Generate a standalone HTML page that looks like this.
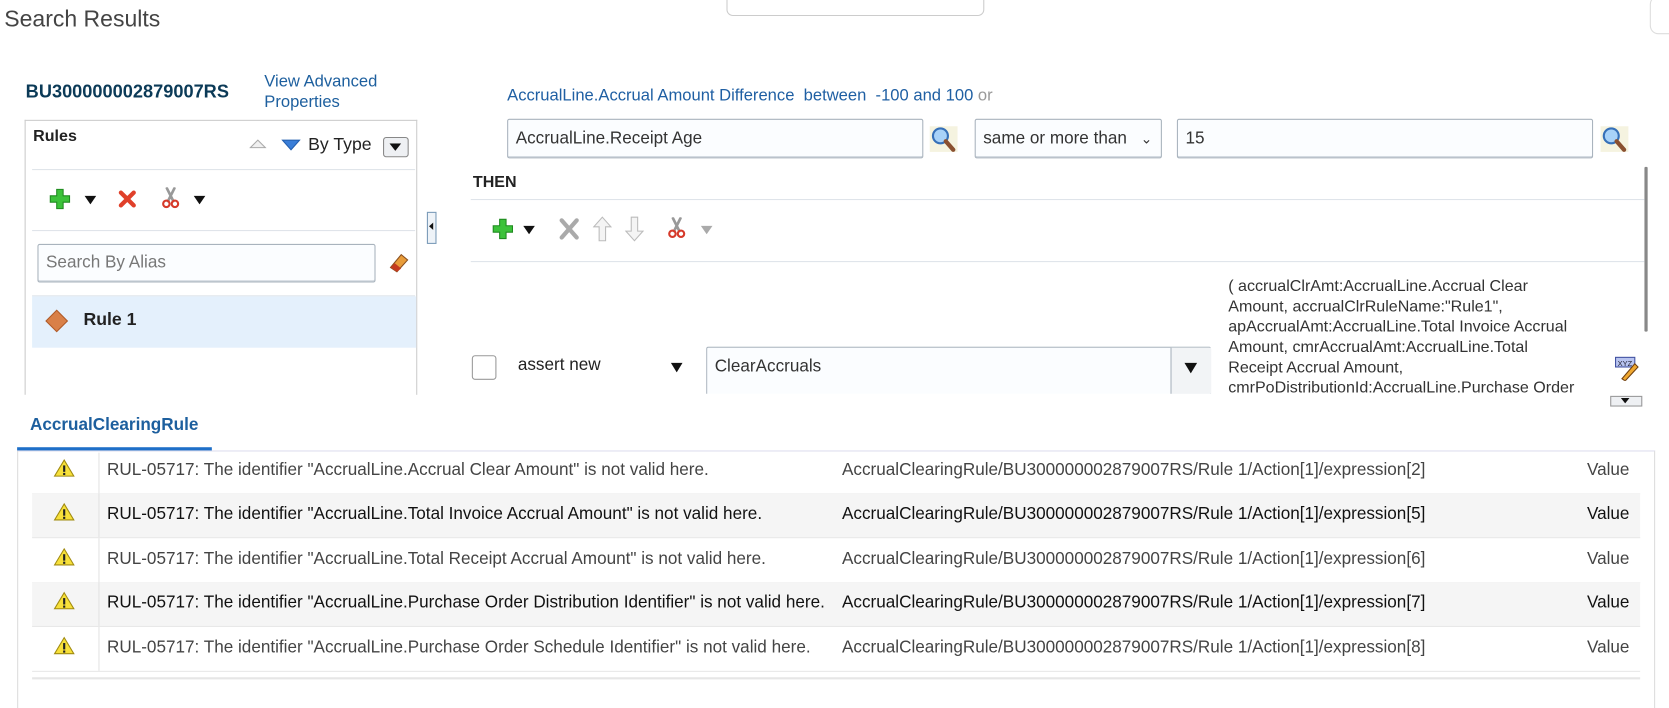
<!DOCTYPE html>
<html><head><meta charset="utf-8"><style>
html,body{margin:0;padding:0;background:#fff;width:1669px;height:688px;overflow:hidden}
#w{position:absolute;left:0;top:0;width:1560px;height:643px;transform:scale(1.0699);transform-origin:0 0;font-family:"Liberation Sans",Arial,sans-serif;color:#333}
.a{position:absolute;white-space:nowrap}
.ln{position:absolute;height:1px;background:#dfe4ea}
.inp{position:absolute;border:1px solid #a9b3bd;border-radius:2px;background:#fbfdff;box-shadow:inset 0 -1px 0 #c8d0d8;font-size:16px;color:#333;box-sizing:border-box;padding-left:7px;display:flex;align-items:center}
.row{position:absolute;left:30px;width:1503px;height:41px;border-bottom:1px solid #e8e8e8;font-size:16px;color:#444}
.row .ic{position:absolute;left:0;top:0;width:62px;height:41px;border-right:1px solid #e3e3e3}
.row span{position:absolute;top:11px}
.alt{background:#f5f5f5;color:#111}
</style></head><body><div id="w">
<svg width="0" height="0" style="position:absolute"><defs>
<g id="sc"><path d="M6 1 L12 13 M13 1 L7 13" stroke="#999" stroke-width="2.5" stroke-linecap="round"/><circle cx="5.5" cy="15.5" r="3" fill="none" stroke="#d63a2a" stroke-width="2"/><circle cx="13.5" cy="15.5" r="3" fill="none" stroke="#d63a2a" stroke-width="2"/></g>
<g id="mg"><rect x="1" y="1" width="26" height="24" fill="#f5f3e0"/><circle cx="11" cy="10" r="7" fill="#a8d2f8" stroke="#3670b8" stroke-width="2"/><path d="M16 15 L23 23" stroke="#8a5030" stroke-width="4" stroke-linecap="round"/></g>
<g id="t"><path d="M10 2 L19 17 H1Z" fill="#f7e03a" stroke="#a08a10"/><rect x="9" y="7" width="2" height="6" fill="#222"/><rect x="9" y="14" width="2" height="2" fill="#222"/></g>
</defs></svg>
<div class="a" style="left:4px;top:6px;font-size:21.5px;color:#444">Search Results</div>
<div style="position:absolute;left:679px;top:-2px;width:239px;height:15px;border:1px solid #ccc;border-radius:0 0 6px 6px"></div>
<div style="position:absolute;left:1542px;top:-4px;width:30px;height:34px;border:1px solid #ddd;border-radius:8px;background:#fff"></div>

<div class="a" style="left:24px;top:76px;font-size:17px;font-weight:bold;color:#0b3a57">BU300000002879007RS</div>
<div class="a" style="left:247px;top:67px;font-size:15.5px;color:#1d5f9e;line-height:19px">View Advanced<br>Properties</div>

<div style="position:absolute;left:23px;top:112px;width:365px;height:256px;border:1px solid #ccc;border-bottom:none"></div>
<div class="a" style="left:31px;top:119px;font-size:15px;font-weight:bold;color:#222">Rules</div>
<svg class="a" style="left:233px;top:130px" width="16" height="10"><path d="M1 8 L8 1 L15 8 Z" fill="#f0f0f0" stroke="#aaa"/></svg>
<svg class="a" style="left:263px;top:130px" width="18" height="11"><path d="M1 1 L17 1 L9 10 Z" fill="#3a7ed8" stroke="#2460b0"/></svg>
<div class="a" style="left:288px;top:126px;font-size:16.5px;color:#222">By Type</div>
<div style="position:absolute;left:358px;top:128px;width:22px;height:17px;border:1px solid #888;border-radius:3px;background:#eef0f3"></div>
<svg class="a" style="left:364px;top:134px" width="11" height="7"><path d="M0 0H11L5.5 7Z" fill="#111"/></svg>
<div class="ln" style="left:30px;top:158px;width:358px"></div>
<svg class="a" style="left:46px;top:176px" width="20" height="20"><path d="M7 1h6v6h6v6h-6v6H7v-6H1V7h6z" fill="#3cc23a" stroke="#1f8a1f"/></svg>
<svg class="a" style="left:79px;top:183px" width="11" height="8"><path d="M0 0H11L5.5 8Z" fill="#111"/></svg>
<svg class="a" style="left:110px;top:177px" width="18" height="18"><path d="M3 3 L15 15 M15 3 L3 15" stroke="#e0402a" stroke-width="4" stroke-linecap="round"/></svg>
<svg class="a" style="left:150px;top:175px" width="20" height="20"><use href="#sc"/></svg>
<svg class="a" style="left:181px;top:183px" width="11" height="8"><path d="M0 0H11L5.5 8Z" fill="#111"/></svg>
<div class="ln" style="left:30px;top:215px;width:358px"></div>
<div class="inp" style="left:35px;top:228px;width:316px;height:36px;color:#777">Search By Alias</div>
<svg class="a" style="left:361px;top:234px" width="22" height="22"><path d="M4 16 L14 4 L20 9 L10 20 Z" fill="#e89c3a" stroke="#8a5020"/><path d="M4 16 L8 12 L14 17 L10 20Z" fill="#c43a20"/></svg>
<div class="ln" style="left:30px;top:276px;width:358px"></div>
<div style="position:absolute;left:30px;top:277px;width:359px;height:48px;background:#e4f0fc"></div>
<svg class="a" style="left:42px;top:289px" width="22" height="22"><path d="M11 1 L21 11 L11 21 L1 11Z" fill="#d98048" stroke="#b05a28"/></svg>
<div class="a" style="left:78px;top:290px;font-size:16.5px;font-weight:bold;color:#222">Rule 1</div>
<div style="position:absolute;left:399px;top:198px;width:7px;height:28px;border:1px solid #7a9ab8;background:#eef3f8"></div>
<svg class="a" style="left:401px;top:208px" width="4" height="7"><path d="M4 0V7L0 3.5Z" fill="#111"/></svg>

<div class="a" style="left:474px;top:81px;font-size:15.5px;color:#1f5fa3">AccrualLine.Accrual Amount Difference&nbsp; between&nbsp; -100 and 100 <span style="color:#999">or</span></div>
<div class="inp" style="left:474px;top:111px;width:389px;height:37px">AccrualLine.Receipt Age</div>
<svg class="a" style="left:868px;top:117px" width="28" height="26"><use href="#mg"/></svg>
<div class="inp" style="left:911px;top:111px;width:175px;height:37px">same or more than <span style="position:absolute;right:8px;font-size:13px">⌄</span></div>
<div class="inp" style="left:1100px;top:111px;width:389px;height:37px">15</div>
<svg class="a" style="left:1495px;top:117px" width="28" height="26"><use href="#mg"/></svg>
<div style="position:absolute;left:1537px;top:156px;width:3px;height:154px;background:#888;border-radius:1px"></div>
<div class="a" style="left:442px;top:162px;font-size:15px;font-weight:bold;color:#222">THEN</div>
<div class="ln" style="left:440px;top:186px;width:1097px"></div>
<svg class="a" style="left:460px;top:204px" width="20" height="20"><path d="M7 1h6v6h6v6h-6v6H7v-6H1V7h6z" fill="#3cc23a" stroke="#1f8a1f"/></svg>
<svg class="a" style="left:489px;top:211px" width="11" height="8"><path d="M0 0H11L5.5 8Z" fill="#111"/></svg>
<svg class="a" style="left:521px;top:203px" width="22" height="22"><path d="M4 3 L18 19 M18 3 L4 19" stroke="#aaa" stroke-width="4" stroke-linecap="round"/></svg>
<svg class="a" style="left:554px;top:202px" width="18" height="24"><path d="M9 1 L17 10 H12 V23 H6 V10 H1Z" fill="#f4f4f4" stroke="#bbb"/></svg>
<svg class="a" style="left:584px;top:202px" width="18" height="24"><path d="M9 23 L17 14 H12 V1 H6 V14 H1Z" fill="#f4f4f4" stroke="#bbb"/></svg>
<svg class="a" style="left:623px;top:203px" width="20" height="20"><use href="#sc"/></svg>
<svg class="a" style="left:655px;top:211px" width="11" height="8"><path d="M0 0H11L5.5 8Z" fill="#aaa"/></svg>
<div class="ln" style="left:440px;top:244px;width:1097px"></div>
<div style="position:absolute;left:441px;top:332px;width:21px;height:21px;border:1px solid #999;border-radius:3px;background:#fff"></div>
<div class="a" style="left:484px;top:333px;font-size:16px;color:#222">assert new</div>
<svg class="a" style="left:627px;top:339px" width="11" height="9"><path d="M0 0H11L5.5 9Z" fill="#111"/></svg>
<div style="position:absolute;left:660px;top:324px;width:472px;height:44px;overflow:hidden">
<div class="inp" style="left:0;top:0;width:472px;height:60px;align-items:flex-start;padding-top:9px">ClearAccruals</div>
<div style="position:absolute;left:434px;top:1px;width:37px;height:60px;border-left:1px solid #a9b3bd;background:#f2f4f6"></div>
<svg class="a" style="left:447px;top:15px" width="12" height="10"><path d="M0 0H12L6 10Z" fill="#111"/></svg>
</div>
<div style="position:absolute;left:1148px;top:258px;width:325px;height:110px;overflow:hidden;font-size:15px;line-height:19px;color:#333">( accrualClrAmt:AccrualLine.Accrual Clear Amount, accrualClrRuleName:"Rule1", apAccrualAmt:AccrualLine.Total Invoice Accrual Amount, cmrAccrualAmt:AccrualLine.Total Receipt Accrual Amount, cmrPoDistributionId:AccrualLine.Purchase Order</div>
<svg class="a" style="left:1508px;top:332px" width="24" height="24"><rect x="2" y="2" width="18" height="9" fill="#b8c4f0" stroke="#4050a0"/><text x="4" y="10" font-size="7" font-family="Liberation Sans" fill="#223">XYZ</text><path d="M8 22 L20 8 L23 11 L11 24Z" fill="#f0a830" stroke="#704010"/></svg>
<div style="position:absolute;left:1505px;top:370px;width:28px;height:8px;border:1px solid #999;background:#eef0f3"></div>
<svg class="a" style="left:1515px;top:372px" width="8" height="5"><path d="M0 0H8L4 5Z" fill="#111"/></svg>

<div class="a" style="left:28px;top:389px;font-size:16px;font-weight:bold;color:#1d5f9e">AccrualClearingRule</div>
<div style="position:absolute;left:16px;top:418px;width:182px;height:4px;background:#1e6fc8"></div>
<div style="position:absolute;left:16px;top:421px;width:1529px;height:240px;border-left:1px solid #ddd;border-right:1px solid #ddd;border-top:1px solid #dde"></div>
<div style="position:absolute;left:0;top:423px;width:1560px;height:230px;overflow:hidden">
<div class="row" style="top:-3px"><div class="ic"></div><span style="left:70px">RUL-05717: The identifier "AccrualLine.Accrual Clear Amount" is not valid here.</span><span style="left:757px">AccrualClearingRule/BU300000002879007RS/Rule 1/Action[1]/expression[2]</span><span style="right:10px">Value</span></div>
<div class="row alt" style="top:38px"><div class="ic"></div><span style="left:70px">RUL-05717: The identifier "AccrualLine.Total Invoice Accrual Amount" is not valid here.</span><span style="left:757px">AccrualClearingRule/BU300000002879007RS/Rule 1/Action[1]/expression[5]</span><span style="right:10px">Value</span></div>
<div class="row" style="top:80px"><div class="ic"></div><span style="left:70px">RUL-05717: The identifier "AccrualLine.Total Receipt Accrual Amount" is not valid here.</span><span style="left:757px">AccrualClearingRule/BU300000002879007RS/Rule 1/Action[1]/expression[6]</span><span style="right:10px">Value</span></div>
<div class="row alt" style="top:121px"><div class="ic"></div><span style="left:70px">RUL-05717: The identifier "AccrualLine.Purchase Order Distribution Identifier" is not valid here.</span><span style="left:757px">AccrualClearingRule/BU300000002879007RS/Rule 1/Action[1]/expression[7]</span><span style="right:10px">Value</span></div>
<div class="row" style="top:163px"><div class="ic"></div><span style="left:70px">RUL-05717: The identifier "AccrualLine.Purchase Order Schedule Identifier" is not valid here.</span><span style="left:757px">AccrualClearingRule/BU300000002879007RS/Rule 1/Action[1]/expression[8]</span><span style="right:10px">Value</span></div>
<div style="position:absolute;left:30px;top:210px;width:1503px;height:2px;background:#e6e6e6"></div>
<svg class="a" style="left:50px;top:5px" width="20" height="190">
<use href="#t"/><use href="#t" y="41"/><use href="#t" y="83"/><use href="#t" y="124"/><use href="#t" y="166"/>
</svg>
</div>
</div></body></html>
